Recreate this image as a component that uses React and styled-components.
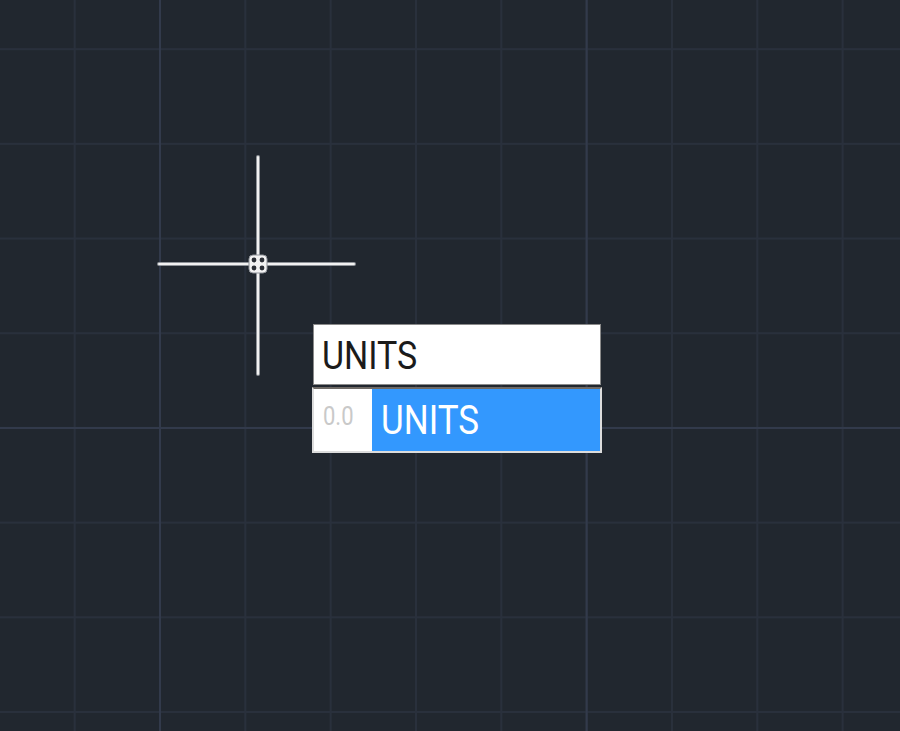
import React from 'react';
import styled, { createGlobalStyle } from 'styled-components';

const GlobalStyle = createGlobalStyle`
  html, body {
    margin: 0;
    padding: 0;
    background: #21272f;
  }
`;

const CELL_X = 85.33;
const CELL_Y = 94.7;

const Canvas = styled.div`
  position: relative;
  width: 900px;
  height: 731px;
  overflow: hidden;
  background-color: #21272f;
  background-image:
    linear-gradient(to right, #323a4b 0, #323a4b 2px, transparent 2px),
    linear-gradient(to bottom, #323a4b 0, #323a4b 2px, transparent 2px),
    linear-gradient(to right, #29303c 0, #29303c 2px, transparent 2px),
    linear-gradient(to bottom, #29303c 0, #29303c 2px, transparent 2px);
  background-size:
    ${CELL_X * 5}px 100%,
    100% ${CELL_Y * 5}px,
    ${CELL_X}px 100%,
    100% ${CELL_Y}px;
  background-position:
    159px 0,
    0 427px,
    ${159 - CELL_X * 2}px 0,
    0 ${427 - CELL_Y * 5}px;
`;

const Cursor = styled.svg`
  position: absolute;
  left: 150px;
  top: 150px;
`;

const DynamicInput = styled.div`
  position: absolute;
  left: 312px;
  top: 324px;
  width: 290px;
  display: flex;
  flex-direction: column;
  gap: 2px;
  font-family: Roboto, "Noto Sans", sans-serif;
`;

const CommandField = styled.div`
  height: 61px;
  margin: 0 1px;
  display: flex;
  align-items: center;
  padding: 0 8px;
  background: #ffffff;
  border: 1px solid #8a8a8a;
  box-sizing: border-box;
  color: #1b1b1b;
`;

const Suggestions = styled.div`
  display: flex;
  height: 66px;
  box-sizing: border-box;
  border: 2px solid #dcdcdc;
  border-top: 2px solid #6e6a66;
  background: #ffffff;
`;

const HistoryCell = styled.div`
  width: 58px;
  display: flex;
  align-items: center;
  padding-left: 9px;
  padding-bottom: 6px;
  box-sizing: border-box;
  color: #c9c9c9;
`;

const Option = styled.div`
  flex: 1;
  display: flex;
  align-items: center;
  padding-left: 9px;
  background: ${({ $active }) => ($active ? '#3398fe' : '#ffffff')};
  color: ${({ $active }) => ($active ? '#ffffff' : '#1b1b1b')};
`;

const Label = styled.span`
  display: inline-block;
  font-size: ${({ $size }) => $size}px;
  line-height: 1;
  transform: scaleY(1.14);
  transform-origin: center;
`;

const Crosshair = () => (
  <Cursor width="220" height="240" viewBox="0 0 220 240">
    <g stroke="#8f9399" strokeWidth="4" strokeLinecap="round">
      <line x1="108" y1="7" x2="108" y2="224" />
      <line x1="9" y1="114" x2="204" y2="114" />
    </g>
    <g stroke="#f2f2f2" strokeWidth="2" strokeLinecap="round">
      <line x1="108" y1="7" x2="108" y2="224" />
      <line x1="9" y1="114" x2="204" y2="114" />
    </g>
    <rect x="99" y="105" width="18" height="18" rx="4" fill="#f2f2f2" stroke="#8f9399" strokeWidth="1" />
    <g fill="#2a2e35">
      <circle cx="104" cy="110" r="2.4" />
      <circle cx="112" cy="110" r="2.4" />
      <circle cx="104" cy="118" r="2.4" />
      <circle cx="112" cy="118" r="2.4" />
    </g>
  </Cursor>
);

export default function App() {
  return (
    <>
      <GlobalStyle />
      <Canvas>
        <Crosshair />
        <DynamicInput>
          <CommandField>
            <Label $size={34}>UNITS</Label>
          </CommandField>
          <Suggestions>
            <HistoryCell>
              <Label $size={22}>0.0</Label>
            </HistoryCell>
            <Option $active>
              <Label $size={35}>UNITS</Label>
            </Option>
          </Suggestions>
        </DynamicInput>
      </Canvas>
    </>
  );
}
